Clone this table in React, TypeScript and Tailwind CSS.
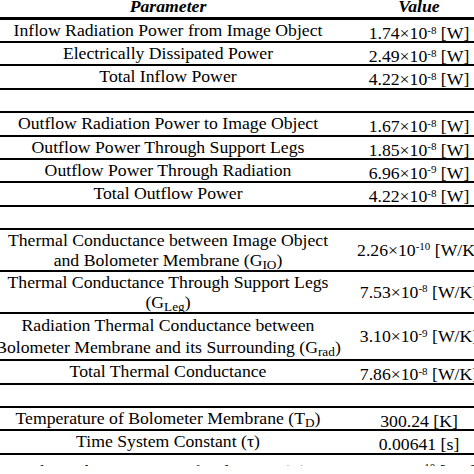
import React from 'react';

type Row = {
  label: React.ReactNode;
  value?: React.ReactNode;
  h: string;
  lead: string;
};

const Sci = ({ m, e, unit }: { m: string; e: string; unit: string }) => (
  <span>
    {m}×10<sup className="text-[11px]">{e}</sup> [{unit}]
  </span>
);

const one = 'h-[23.4px]';
const lead1 = 'leading-[21.4px]';

const rows: Row[] = [
  { label: 'Inflow Radiation Power from Image Object', value: <Sci m="1.74" e="-8" unit="W" />, h: 'h-[24px]', lead: lead1 },
  { label: 'Electrically Dissipated Power', value: <Sci m="2.49" e="-8" unit="W" />, h: one, lead: lead1 },
  { label: 'Total Inflow Power', value: <Sci m="4.22" e="-8" unit="W" />, h: one, lead: lead1 },
  { label: '', h: one, lead: lead1 },
  { label: 'Outflow Radiation Power to Image Object', value: <Sci m="1.67" e="-8" unit="W" />, h: one, lead: lead1 },
  { label: 'Outflow Power Through Support Legs', value: <Sci m="1.85" e="-8" unit="W" />, h: one, lead: lead1 },
  { label: 'Outflow Power Through Radiation', value: <Sci m="6.96" e="-9" unit="W" />, h: one, lead: lead1 },
  { label: 'Total Outflow Power', value: <Sci m="4.22" e="-8" unit="W" />, h: one, lead: lead1 },
  { label: '', h: one, lead: lead1 },
  {
    label: (
      <>
        Thermal Conductance between Image Object
        <br />
        and Bolometer Membrane (G<sub>IO</sub>)
      </>
    ),
    value: <Sci m="2.26" e="-10" unit="W/K" />,
    h: 'h-[42px]',
    lead: 'leading-[20px]',
  },
  {
    label: (
      <>
        Thermal Conductance Through Support Legs
        <br />
        (G<sub>Leg</sub>)
      </>
    ),
    value: <Sci m="7.53" e="-8" unit="W/K" />,
    h: 'h-[42px]',
    lead: 'leading-[20px]',
  },
  {
    label: (
      <>
        Radiation Thermal Conductance between
        <br />
        Bolometer Membrane and its Surrounding (G<sub>rad</sub>)
      </>
    ),
    value: <Sci m="3.10" e="-9" unit="W/K" />,
    h: 'h-[47px]',
    lead: 'leading-[22px]',
  },
  { label: 'Total Thermal Conductance', value: <Sci m="7.86" e="-8" unit="W/K" />, h: one, lead: lead1 },
  { label: '', h: one, lead: lead1 },
  {
    label: (
      <>
        Temperature of Bolometer Membrane (T<sub>D</sub>)
      </>
    ),
    value: '300.24 [K]',
    h: one,
    lead: lead1,
  },
  { label: 'Time System Constant (τ)', value: '0.00641 [s]', h: one, lead: lead1 },
  {
    label: 'Thermal Capacitance of Bolometer (C)',
    value: <Sci m="5.04" e="-10" unit="J/K" />,
    h: one,
    lead: 'leading-[21.4px] pt-[6px]',
  },
];

export default function App() {
  return (
    <div className="w-[474px] h-[474px] overflow-hidden bg-white text-[17.7px] text-black font-['Liberation_Serif',serif]">
      <div className="h-[466px] overflow-hidden">
        <div className="ml-[-8px] w-[502px]">
          {/* header */}
          <div className="grid grid-cols-[352px_150px] h-[17px] leading-[13px] font-bold italic">
            <div className="text-center">Parameter</div>
            <div className="text-center">Value</div>
          </div>

          {rows.map((r, i) => (
            <div
              key={i}
              className={`grid grid-cols-[352px_150px] border-black ${i === 0 ? 'border-t-[3px]' : 'border-t-2'} ${r.h}`}
            >
              <div className={`text-center whitespace-nowrap ${r.lead}`}>{r.label}</div>
              <div
                className={`flex justify-center whitespace-nowrap ${
                  i === rows.length - 1 ? 'items-start pt-[6px] leading-[21.4px]' : 'items-center'
                }`}
              >
                {r.value}
              </div>
            </div>
          ))}
        </div>
      </div>
    </div>
  );
}
